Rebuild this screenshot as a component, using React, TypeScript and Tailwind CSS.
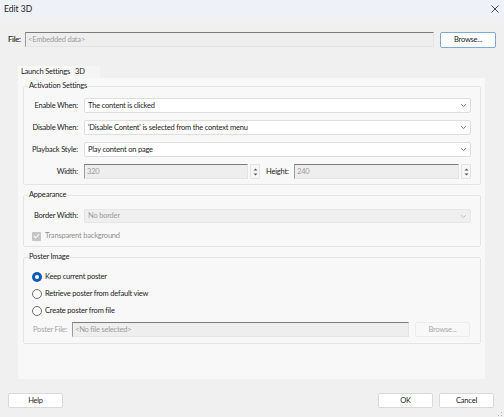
import React from "react";

const labelCls = "w-[55px] shrink-0 whitespace-nowrap text-right pr-[1px]";

function Chevron({ faded }: { faded?: boolean }) {
    return (
        <svg width="7" height="5" viewBox="0 0 7 5" className={faded ? "opacity-40" : ""}>
            <path d="M1 1.2 L3.5 3.6 L6 1.2" fill="none" stroke="#6b6b6b" strokeWidth="0.9" />
        </svg>
    );
}

function Select({ value, disabled }: { value: string; disabled?: boolean }) {
    return (
        <div
            className={
                "flex h-full w-[387px] items-center justify-between rounded-[2px] border pl-[3px] pr-[3px] " +
                (disabled
                    ? "border-[#e6e6e6] bg-[#efefef] text-[#9a9a9a]"
                    : "border-[#dedede] bg-white text-[#1b1b1b]")
            }
        >
            <span className="truncate">{value}</span>
            <Chevron faded={disabled} />
        </div>
    );
}

function Spinner() {
    return (
        <div className="ml-[2px] flex h-[15px] w-[10px] flex-col items-center justify-center gap-[2px] rounded-[1px] border border-[#e2e2e2] bg-[#f6f6f6]">
            <svg width="5" height="3" viewBox="0 0 5 3">
                <path d="M0.5 2.6 L2.5 0.4 L4.5 2.6 Z" fill="#555" />
            </svg>
            <svg width="5" height="3" viewBox="0 0 5 3">
                <path d="M0.5 0.4 L2.5 2.6 L4.5 0.4 Z" fill="#555" />
            </svg>
        </div>
    );
}

function InsetInput({ value, className }: { value: string; className: string }) {
    return (
        <div
            className={
                "flex items-center whitespace-nowrap border-t border-l border-t-[#7c7c7c] border-l-[#9a9a9a] border-r border-b border-r-[#e4e4e4] border-b-[#e4e4e4] bg-[#eeeeee] pl-[2px] text-[#9c9c9c] " +
                className
            }
        >
            {value}
        </div>
    );
}

function Radio({ checked, label }: { checked?: boolean; label: string }) {
    return (
        <div className="flex h-[17px] items-center gap-[3px] pl-[8px]">
            {checked ? (
                <span className="flex h-[10px] w-[10px] items-center justify-center rounded-full bg-[#0f5cb8]">
                    <span className="h-[4px] w-[4px] rounded-full bg-white" />
                </span>
            ) : (
                <span className="h-[10px] w-[10px] rounded-full border border-[#6f6f6f] bg-[#fafafa]" />
            )}
            <span>{label}</span>
        </div>
    );
}

export default function App() {
    return (
        <div className="flex h-[417px] w-[504px] flex-col bg-[#f0f0f0] font-['Lato',sans-serif] text-[7.5px] leading-[10px] tracking-[-0.2px] text-[#1b1b1b]">
            {/* title bar */}
            <div className="flex h-[17px] shrink-0 items-center justify-between bg-[#eef2f8] pl-[4px] pr-[5px]">
                <span className="text-[8.5px] tracking-normal">Edit 3D</span>
                <svg width="8" height="8" viewBox="0 0 8 8">
                    <path d="M0.5 0.5 L7.5 7.5 M7.5 0.5 L0.5 7.5" stroke="#333" strokeWidth="0.9" />
                </svg>
            </div>

            {/* file row */}
            <div className="mt-[15px] flex h-[16px] items-start pl-[8px]">
                <span className="w-[17px] pt-[3px] font-semibold">File:</span>
                <InsetInput value="<Embedded data>" className="h-[15px] w-[409px]" />
                <button className="ml-[6px] h-[16px] w-[56px] rounded-[2px] border border-[#7fa9d6] bg-white">
                    Browse...
                </button>
            </div>

            {/* tabs */}
            <div className="mt-[18px] flex h-[12px] whitespace-nowrap pl-[18px]">
                <div className="flex w-[55px] items-center justify-center bg-[#f9f9f9]">Launch Settings</div>
                <div className="flex w-[27px] items-center bg-[#f5f5f5] pl-[2px]">3D</div>
            </div>

            {/* tab panel */}
            <div className="ml-[18px] flex h-[301px] w-[467px] flex-col bg-[#f8f8f8] pt-[3px] pl-[5px] pr-[4px]">
                <fieldset className="h-[104px] rounded-[2px] border border-[#e4e4e4] pr-[9px]">
                    <legend className="ml-[4px] px-[1px]">Activation Settings</legend>
                    <div className="mt-[7px] flex flex-col gap-[7px]">
                        <div className="flex h-[15px] items-center gap-[5px]">
                            <span className={labelCls}>Enable When:</span>
                            <Select value="The content is clicked" />
                        </div>
                        <div className="flex h-[15px] items-center gap-[5px]">
                            <span className={labelCls}>Disable When:</span>
                            <Select value="'Disable Content' is selected from the context menu" />
                        </div>
                        <div className="flex h-[15px] items-center gap-[5px]">
                            <span className={labelCls}>Playback Style:</span>
                            <Select value="Play content on page" />
                        </div>
                        <div className="flex items-center">
                            <span className={labelCls}>Width:</span>
                            <InsetInput value="320" className="ml-[5px] h-[15px] w-[164px]" />
                            <Spinner />
                            <span className="ml-[6px] w-[28px]">Height:</span>
                            <InsetInput value="240" className="h-[15px] w-[165px]" />
                            <Spinner />
                        </div>
                    </div>
                </fieldset>

                <fieldset className="mt-[5px] h-[57px] rounded-[2px] border border-[#e4e4e4] pr-[9px]">
                    <legend className="ml-[4px] px-[1px]">Appearance</legend>
                    <div className="mt-[9px] flex h-[14px] items-center gap-[5px]">
                        <span className={labelCls}>Border Width:</span>
                        <Select value="No border" disabled />
                    </div>
                    <div className="mt-[8px] flex items-center gap-[4px] pl-[8px] text-[#8f8f8f]">
                        <span className="flex h-[9px] w-[9px] items-center justify-center rounded-[1px] bg-[#c4c4c4]">
                            <svg width="7" height="6" viewBox="0 0 7 6">
                                <path d="M0.8 3 L2.7 4.8 L6.2 1" fill="none" stroke="white" strokeWidth="1.1" />
                            </svg>
                        </span>
                        <span>Transparent background</span>
                    </div>
                </fieldset>

                <fieldset className="mt-[5px] h-[92px] rounded-[2px] border border-[#e4e4e4] pr-[9px]">
                    <legend className="ml-[4px] px-[1px]">Poster Image</legend>
                    <div className="mt-[6px] flex flex-col">
                        <Radio checked label="Keep current poster" />
                        <Radio label="Retrieve poster from default view" />
                        <Radio label="Create poster from file" />
                    </div>
                    <div className="mt-[3px] flex items-center pl-[9px]">
                        <span className="w-[39px] whitespace-nowrap text-[#a3a3a3]">Poster File:</span>
                        <InsetInput value="<No file selected>" className="h-[15px] w-[337px]" />
                        <button className="ml-[6px] h-[15px] w-[55px] rounded-[2px] border border-[#ececec] bg-[#f8f8f8] text-[#a8a8a8]">
                            Browse...
                        </button>
                    </div>
                </fieldset>
            </div>

            {/* bottom buttons */}
            <div className="relative mt-[14px] flex h-[15px] items-start pl-[8px] pr-[10px]">
                <button className="h-[15px] w-[55px] rounded-[2px] border border-[#d9d9d9] bg-white">Help</button>
                <div className="flex-1" />
                <button className="h-[15px] w-[55px] rounded-[2px] border border-[#d9d9d9] bg-white">OK</button>
                <button className="ml-[6px] h-[15px] w-[55px] rounded-[2px] border border-[#d9d9d9] bg-white">Cancel</button>
                <svg className="absolute right-[1px] top-[19px]" width="5" height="5" viewBox="0 0 5 5">
                    <rect x="3" y="0" width="1" height="1" fill="#b5b5b5" />
                    <rect x="3" y="3" width="1" height="1" fill="#b5b5b5" />
                    <rect x="0" y="3" width="1" height="1" fill="#b5b5b5" />
                </svg>
            </div>
        </div>
    );
}
